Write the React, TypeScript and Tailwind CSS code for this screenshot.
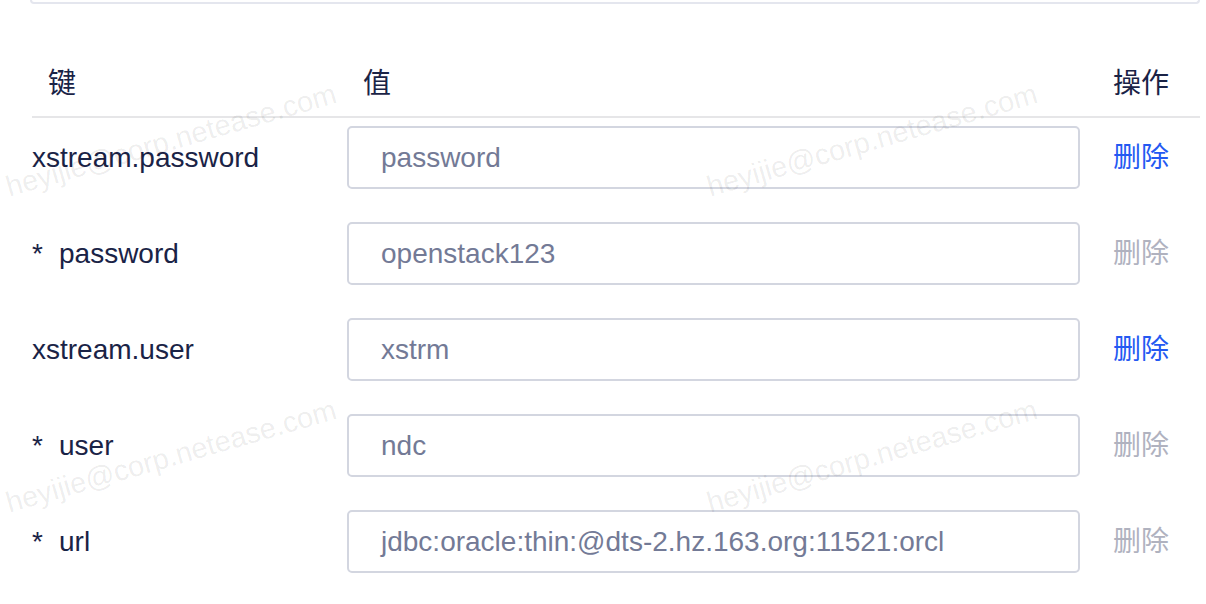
const rows = [
  { key: "xstream.password", required: false, value: "password", removable: true },
  { key: "password", required: true, value: "openstack123", removable: false },
  { key: "xstream.user", required: false, value: "xstrm", removable: true },
  { key: "user", required: true, value: "ndc", removable: false },
  { key: "url", required: true, value: "jdbc:oracle:thin:@dts-2.hz.163.org:11521:orcl", removable: false },
];

const watermarks = [
  { left: "left-[-4px]", top: "top-[123px]" },
  { left: "left-[697px]", top: "top-[123px]" },
  { left: "left-[-4px]", top: "top-[439px]" },
  { left: "left-[697px]", top: "top-[439px]" },
];

const App = () => {
  return (
    <div
      className="relative w-[1206px] h-[604px] overflow-hidden bg-white text-[28px] text-[#1a2346]"
      style={{ fontFamily: '"Liberation Sans", "Noto Sans CJK SC", sans-serif' }}
    >
      {/* bottom edge of the previous field */}
      <div className="ml-[30px] w-[1170px] h-[4px] border-x-2 border-b-2 border-[#e4e6ee] rounded-b-[5px]" />

      <div className="ml-[32px] w-[1168px] mt-[48px]">
        {/* header */}
        <div className="flex items-center h-[66px] border-b-2 border-[#e6e6e8]">
          <div className="w-[315px] pl-[16px]">键</div>
          <div className="w-[733px] pl-[16px]">值</div>
          <div className="ml-[33px]">操作</div>
        </div>

        {/* rows */}
        <div className="flex flex-col gap-[33px] pt-[8px]">
          {rows.map((row) => (
            <div key={row.key + row.value} className="flex items-center h-[63px]">
              <div className="w-[315px] flex items-center">
                {row.required && <span className="w-[27px]">*</span>}
                <span>{row.key}</span>
              </div>
              <div className="w-[733px] h-[63px] flex items-center pl-[32px] border-2 border-[#d3d6e0] rounded-[5px] text-[#737a96]">
                {row.value}
              </div>
              <div
                className={`ml-[33px] ${row.removable ? "text-[#2459f2]" : "text-[#b0b2bf]"}`}
              >
                删除
              </div>
            </div>
          ))}
        </div>
      </div>

      {/* watermark */}
      {watermarks.map((w, i) => (
        <span
          key={i}
          className={`pointer-events-none absolute ${w.left} ${w.top} w-[350px] text-center text-[29px] leading-[34px] text-[#000000]/[0.08] -rotate-[16deg] whitespace-nowrap`}
        >
          heyijie@corp.netease.com
        </span>
      ))}
    </div>
  );
};

export default App;
